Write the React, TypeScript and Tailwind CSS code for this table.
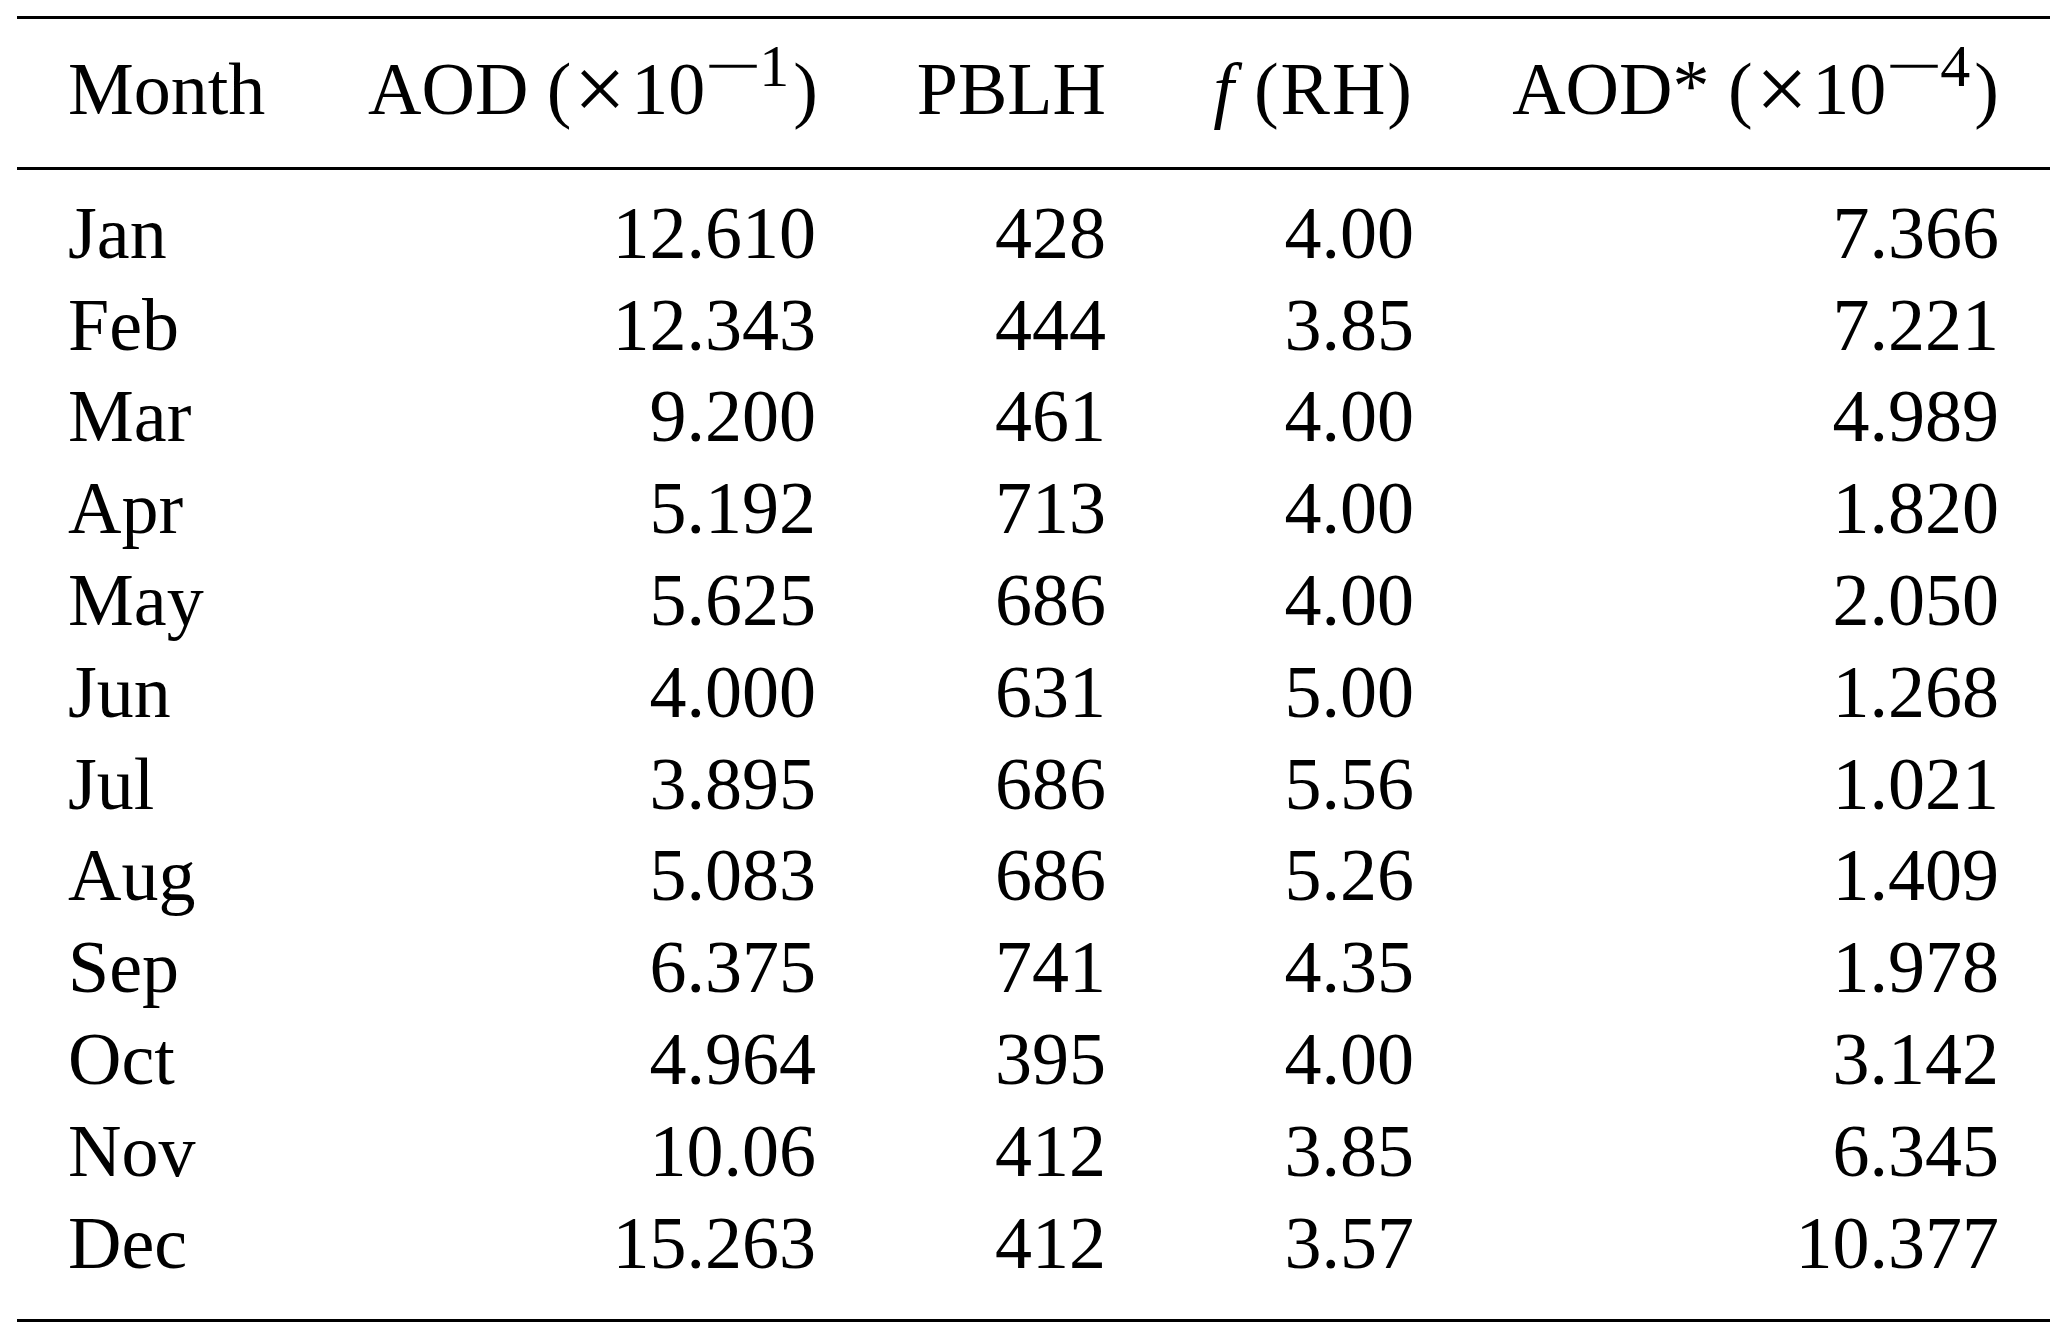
import React from 'react';

const rows: [string, string, string, string, string][] = [
  ['Jan', '12.610', '428', '4.00', '7.366'],
  ['Feb', '12.343', '444', '3.85', '7.221'],
  ['Mar', '9.200', '461', '4.00', '4.989'],
  ['Apr', '5.192', '713', '4.00', '1.820'],
  ['May', '5.625', '686', '4.00', '2.050'],
  ['Jun', '4.000', '631', '5.00', '1.268'],
  ['Jul', '3.895', '686', '5.56', '1.021'],
  ['Aug', '5.083', '686', '5.26', '1.409'],
  ['Sep', '6.375', '741', '4.35', '1.978'],
  ['Oct', '4.964', '395', '4.00', '3.142'],
  ['Nov', '10.06', '412', '3.85', '6.345'],
  ['Dec', '15.263', '412', '3.57', '10.377'],
];

const cols = 'grid grid-cols-[300px_448px_290px_308px_585px] pl-[51px] pr-[51px]';

// scaled power of ten, e.g. (×10^-1)
const Power: React.FC<{ exp: string }> = ({ exp }) => (
  <span className="whitespace-nowrap">
    (<span className="inline-block scale-125 ml-[8px] mr-[10px]">×</span>10
    <span className="relative -top-[28px] text-[60px] ml-[2px]">
      <span className="inline-block w-[52px] text-center scale-x-[1.7]">−</span>
      {exp}
    </span>
    <span className="ml-[4px]">)</span>
  </span>
);

export default function App() {
  return (
    <div className="min-h-screen bg-white px-[17px] pt-[16px] text-black font-['Liberation_Serif',serif] text-[74px] leading-[91.8px]">
      <div className="border-t-[3px] border-b-[3px] border-black">
        {/* header */}
        <div className={`${cols} pt-[25px] pb-[26px] border-b-[3px] border-black`}>
          <div>Month</div>
          <div className="text-right whitespace-nowrap">
            AOD <Power exp="1" />
          </div>
          <div className="text-right">PBLH</div>
          <div className="text-right whitespace-nowrap">
            <span className="italic mr-[20px]">f</span>
            <span className="tracking-[2px]">(RH)</span>
          </div>
          <div className="text-right whitespace-nowrap">
            AOD<span className="relative -top-[3px]">*</span>{' '}
            <Power exp="4" />
          </div>
        </div>

        {/* body */}
        <div className="pt-[18px] pb-[30px]">
          {rows.map((r) => (
            <div key={r[0]} className={cols}>
              <div>{r[0]}</div>
              <div className="text-right">{r[1]}</div>
              <div className="text-right">{r[2]}</div>
              <div className="text-right">{r[3]}</div>
              <div className="text-right">{r[4]}</div>
            </div>
          ))}
        </div>
      </div>
    </div>
  );
}
